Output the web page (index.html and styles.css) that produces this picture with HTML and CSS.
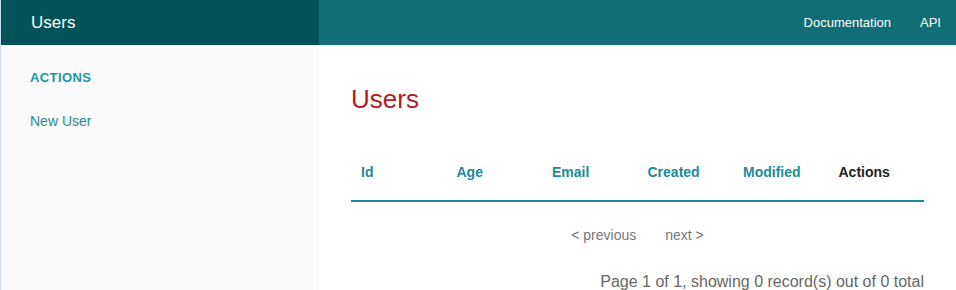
FILE: index.html
```html
<!DOCTYPE html>
<html lang="en">
<head>
  <meta charset="UTF-8">
  <title>Users</title>
  <link rel="stylesheet" href="styles.css">
</head>
<body>
  <nav class="top-bar">
    <div class="title-area">
      <h1><a href="#">Users</a></h1>
    </div>
    <ul class="top-links">
      <li><a href="#">Documentation</a></li>
      <li><a href="#">API</a></li>
    </ul>
  </nav>
  <div class="page">
    <nav class="side-nav">
      <ul>
        <li class="heading">Actions</li>
        <li><a href="#">New User</a></li>
      </ul>
    </nav>
    <div class="content">
      <h3>Users</h3>
      <table class="users">
        <thead>
          <tr>
            <th><a href="#">Id</a></th>
            <th><a href="#">Age</a></th>
            <th><a href="#">Email</a></th>
            <th><a href="#">Created</a></th>
            <th><a href="#">Modified</a></th>
            <th class="actions">Actions</th>
          </tr>
        </thead>
        <tbody></tbody>
      </table>
      <div class="paginator">
        <ul class="pagination">
          <li class="prev disabled"><a href="#">&lt; previous</a></li>
          <li class="next disabled"><a href="#">next &gt;</a></li>
        </ul>
        <p>Page 1 of 1, showing 0 record(s) out of 0 total</p>
      </div>
    </div>
  </div>
</body>
</html>
```

FILE: styles.css
```css
html, body {
  height: 100%;
}
body {
  margin: 0;
  padding: 0;
  font-family: "Liberation Sans", Arial, sans-serif;
  color: #222;
  background: #fff;
  border-left: 1px solid #c9dcee;
  box-sizing: border-box;
}
a {
  text-decoration: none;
  color: #1798a5;
}
ul {
  list-style: none;
  margin: 0;
  padding: 0;
}

/* top bar */
.top-bar {
  display: flex;
  height: 45px;
  background: #116d76;
}
.top-bar .title-area {
  width: 318px;
  background: #02525a;
}
.top-bar h1 {
  margin: 0;
  padding-left: 30px;
  line-height: 45px;
  font-size: 17px;
  font-weight: normal;
}
.top-bar h1 a {
  color: #fff;
}
.top-links {
  display: flex;
  margin-left: auto;
  padding-right: 15px;
}
.top-links li a {
  display: block;
  line-height: 45px;
  padding-left: 29px;
  font-size: 13px;
  color: #fff;
}

/* body */
.page {
  display: flex;
  height: calc(100% - 45px);
}
.side-nav {
  width: 318px;
  background: #fafafa;
  padding: 21px 29px 0;
  box-sizing: border-box;
}
.side-nav .heading {
  font-size: 13px;
  font-weight: bold;
  text-transform: uppercase;
  letter-spacing: 0.4px;
  color: #1798a5;
  padding: 4px 0;
}
.side-nav li a {
  display: block;
  margin-top: 24px;
  font-size: 14px;
  color: #2a8b96;
}
.content {
  flex: 1;
  padding: 0 32px;
}
.content h3 {
  margin: 41px 0 0;
  font-size: 26px;
  font-weight: normal;
  line-height: 1;
  color: #b31a1e;
}
.users {
  width: 100%;
  margin-top: 36px;
  border-collapse: collapse;
  table-layout: fixed;
}
.users thead {
  border-bottom: 2px solid #1e8b9a;
}
.users th {
  text-align: left;
  padding: 16px 10px 20px;
  font-size: 14px;
  font-weight: bold;
}
.users th a {
  color: #1e8b9a;
}
.users th.actions {
  color: #222;
}
.paginator {
  text-align: right;
}
.pagination {
  display: flex;
  justify-content: center;
  gap: 29px;
  margin-top: 24px;
}
.pagination li a {
  font-size: 14px;
  color: #777;
}
.paginator p {
  margin: 29px 0 0;
  font-size: 16px;
  color: #666;
}
```
